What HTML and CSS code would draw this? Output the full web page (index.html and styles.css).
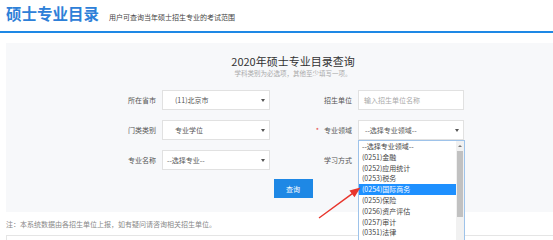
FILE: index.html
```html
<!DOCTYPE html>
<html lang="zh-CN">
<head>
    <meta charset="UTF-8">
    <meta name="viewport" content="width=device-width, initial-scale=1.0">
    <title>硕士专业目录</title>
    <link rel="stylesheet" href="styles.css">
</head>
<body>

<header class="top">
    <h1 class="title">硕士专业目录</h1>
    <span class="subtitle">用户可查询当年硕士招生专业的考试范围</span>
</header>

<div class="main">
    <section class="panel">
        <h2 class="panel-title">2020年硕士专业目录查询</h2>
        <p class="panel-tip">学科类别为必选项，其他至少填写一项。</p>

        <div class="form-grid">
            <label class="label">所在省市</label>
            <div class="select select-wide">(11)北京市</div>
            <label class="label">招生单位</label>
            <div class="input placeholder">输入招生单位名称</div>

            <label class="label">门类类别</label>
            <div class="select select-wide">专业学位</div>
            <label class="label"><span class="required">*</span>专业领域</label>
            <div class="select select-right">--选择专业领域--</div>

            <label class="label">专业名称</label>
            <div class="select">--选择专业--</div>
            <label class="label">学习方式</label>
            <!-- covered by the open list -->
            <div class="select select-right"></div>
        </div>

        <div class="actions">
            <button class="btn">查询</button>
        </div>
    </section>

    <p class="note">注：本系统数据由各招生单位上报，如有疑问请咨询相关招生单位。</p>
    <div class="result"></div>
</div>

<!-- opened list of 专业领域 -->
<div class="dropdown">
    <ul class="options">
        <li>--选择专业领域--</li>
        <li>(0251)金融</li>
        <li>(0252)应用统计</li>
        <li>(0253)税务</li>
        <li class="active">(0254)国际商务</li>
        <li>(0255)保险</li>
        <li>(0256)资产评估</li>
        <li>(0257)审计</li>
        <li>(0351)法律</li>
    </ul>
    <div class="scrollbar">
        <span class="scroll-up"></span>
        <span class="scroll-thumb"></span>
    </div>
</div>

<svg class="arrow" width="50" height="40" viewBox="0 0 50 40">
    <polygon points="3.6,33.5 36.5,9.3 34.4,6.6 45.5,3.6 39.5,13.3 37.4,10.6 4.4,34.5" fill="#e8352c"/>
</svg>

</body>
</html>
```

FILE: styles.css
```css
html, body {
    overflow: hidden;
}
body {
    font-family: "Noto Sans CJK SC", "Liberation Sans", sans-serif;
    background-color: #fff;
    color: #555;
    margin: 0;
    padding: 0;
    width: 553px;
    height: 240px;
    position: relative;
}
.top {
    display: flex;
    align-items: center;
    height: 31px;
    padding-left: 6px;
    border-bottom: 2px solid #1e88e5;
}
.title {
    margin: 0;
    font-size: 15.5px;
    font-weight: bold;
    color: #2d80d8;
    line-height: 20px;
    margin-top: -6px;
}
.subtitle {
    margin-left: 10px;
    font-size: 7px;
    color: #444;
    margin-top: 2px;
}
.main {
    margin-left: 6px;
    width: 574px;
}
.panel {
    margin-top: 10px;
    background-color: #f7f8fa;
    padding: 11px 0 14px;
}
.panel-title {
    margin: 0;
    text-align: center;
    font-size: 11px;
    font-weight: normal;
    line-height: 14px;
    color: #333;
}
.panel-tip {
    margin: 1px 0 0;
    text-align: center;
    font-size: 6.5px;
    line-height: 9px;
    color: #aaa;
}
.form-grid {
    display: grid;
    grid-template-columns: 156px 108px 88px 106px;
    grid-auto-rows: 20px;
    row-gap: 10px;
    margin-top: 12px;
}
.label {
    display: flex;
    align-items: center;
    justify-content: flex-end;
    padding-right: 6px;
    font-size: 7px;
    color: #555;
}
.required {
    color: #e53935;
    margin-right: 5px;
}
.select, .input {
    position: relative;
    box-sizing: border-box;
    display: flex;
    align-items: center;
    background-color: #fff;
    border: 1px solid #e1e1e1;
    padding-left: 4px;
    font-size: 7px;
    color: #555;
}
.select-wide {
    padding-left: 12px;
}
.select-right {
    padding-left: 6px;
}
.input {
    padding-left: 5px;
}
.placeholder {
    color: #aaa;
}
.select::after {
    content: "";
    position: absolute;
    right: 4px;
    top: 8px;
    border-left: 2px solid transparent;
    border-right: 2px solid transparent;
    border-top: 3px solid #555;
}
.actions {
    display: flex;
    justify-content: center;
    margin-top: 9px;
}
.btn {
    width: 39px;
    height: 19px;
    border: none;
    background-color: #1e88e5;
    color: #fff;
    font-family: inherit;
    font-size: 7px;
    padding: 0;
    cursor: pointer;
}
.note {
    margin: 7px 0 0;
    font-size: 7px;
    line-height: 10px;
    color: #888;
}
.result {
    margin-top: 6px;
    height: 30px;
    border: 1px solid #e5e5e5;
    border-bottom: none;
}
.dropdown {
    position: absolute;
    left: 358px;
    top: 140px;
    width: 107px;
    height: 100px;
    box-sizing: border-box;
    border: 1px solid #9ec3ea;
    border-bottom: none;
    background-color: #fff;
    display: flex;
}
.options {
    list-style: none;
    margin: 0;
    padding: 0;
    flex: 1;
}
.options li {
    height: 10.8px;
    line-height: 10.8px;
    padding-left: 3px;
    font-size: 7px;
    color: #444;
    white-space: nowrap;
}
.options li.active {
    background-color: #1e90ff;
    color: #fff;
}
.scrollbar {
    position: relative;
    width: 8px;
    background-color: #f1f1f1;
}
.scroll-up {
    position: absolute;
    left: 2px;
    top: 4px;
    border-left: 2px solid transparent;
    border-right: 2px solid transparent;
    border-bottom: 2px solid #777;
}
.scroll-thumb {
    position: absolute;
    left: 1px;
    right: 1px;
    top: 10px;
    height: 66px;
    background-color: #c1c1c1;
}
.arrow {
    position: absolute;
    left: 315px;
    top: 184px;
}
```
